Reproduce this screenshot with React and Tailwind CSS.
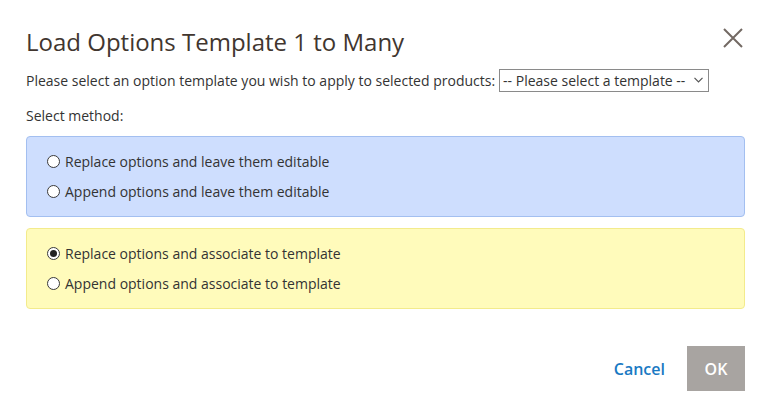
import { useState } from "react";

const methods = [
  {
    tone: "blue",
    items: [
      { id: "replace_edit", label: "Replace options and leave them editable" },
      { id: "append_edit", label: "Append options and leave them editable" },
    ],
  },
  {
    tone: "yellow",
    items: [
      { id: "replace_assoc", label: "Replace options and associate to template" },
      { id: "append_assoc", label: "Append options and associate to template" },
    ],
  },
];

const Radio = ({ checked, onChange, label }) => (
  <label className="flex items-center h-5 gap-[5px] cursor-pointer">
    <span className="w-[13px] h-[13px] rounded-full border border-[#3a3a3a] bg-white flex items-center justify-center shrink-0">
      {checked && <span className="w-[7px] h-[7px] rounded-full bg-[#222]" />}
    </span>
    <input type="radio" className="hidden" checked={checked} onChange={onChange} />
    <span>{label}</span>
  </label>
);

export default function App() {
  const [method, setMethod] = useState("replace_assoc");

  return (
    <div className="w-[769px] h-[417px] bg-white text-[14px] text-[#333] font-['Open_Sans',sans-serif] pt-[26px] pl-[26px] pr-[24px]">
      {/* header */}
      <div className="flex items-start justify-between h-[31px]">
        <h1 className="mt-[1px] text-[24px] leading-[29px] font-normal text-[#41362f]">Load Options Template 1 to Many</h1>
        <button className="mt-[1px] mr-[1px] text-[#736963]">
          <svg width="22" height="22" viewBox="0 0 22 22" fill="none" stroke="currentColor" strokeWidth="2">
            <path d="M2 2L20 20M20 2L2 20" />
          </svg>
        </button>
      </div>

      <div className="mt-[12px] flex items-center h-[23px]">
        <span>Please select an option template you wish to apply to selected products:</span>
        <div className="relative ml-[4px]">
          <select className="appearance-none w-[210px] h-[23px] border border-[#8a8a8a] bg-white pl-[3px] text-[14px] text-[#333] leading-[21px] outline-none">
            <option>-- Please select a template --</option>
          </select>
          <svg className="absolute right-[6px] top-[8px] pointer-events-none" width="9" height="6" viewBox="0 0 9 6" fill="none" stroke="#555" strokeWidth="1.2">
            <path d="M0.5 0.8L4.5 4.8L8.5 0.8" />
          </svg>
        </div>
      </div>

      <div className="mt-[14px] leading-5">Select method:</div>

      <div className="mt-[10px] flex flex-col gap-[11px]">
        {methods.map((group) => (
          <div
            key={group.tone}
            className={
              group.tone === "blue"
                ? "rounded-[4px] border border-[#a3bff0] bg-[#cedefe] pl-5 pt-[14px] pb-[15px] flex flex-col gap-[10px]"
                : "rounded-[4px] border border-[#f3eb8c] bg-[#fffbbb] pl-5 pt-[14px] pb-[15px] flex flex-col gap-[10px]"
            }
          >
            {group.items.map((it) => (
              <Radio key={it.id} label={it.label} checked={method === it.id} onChange={() => setMethod(it.id)} />
            ))}
          </div>
        ))}
      </div>

      {/* footer */}
      <div className="mt-[37px] flex justify-end items-center gap-[22px]">
        <button className="text-[16px] font-semibold text-[#1979c3]">Cancel</button>
        <button disabled className="w-[58px] h-[45px] bg-[#a8a4a1] text-white text-[16px] font-semibold">OK</button>
      </div>
    </div>
  );
}
